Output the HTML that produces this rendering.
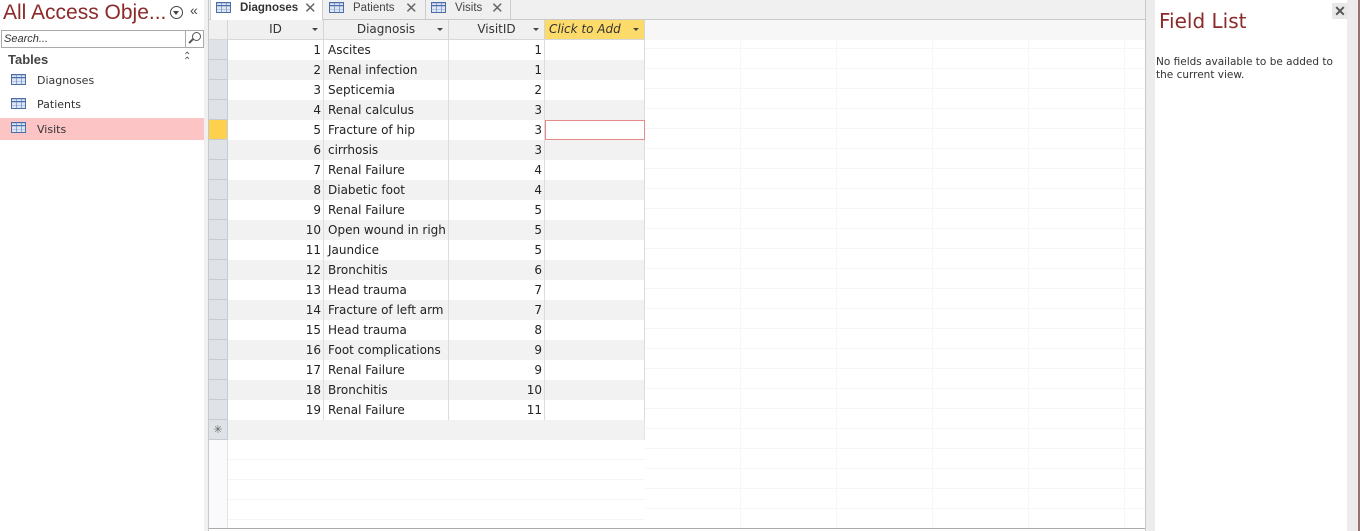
<!DOCTYPE html>
<html><head><style>
*{box-sizing:border-box;margin:0;padding:0}
body{width:1360px;height:531px;overflow:hidden;background:#fff;font-family:"Liberation Sans",sans-serif;position:relative;color:#222}
.a{position:absolute}
.tblico{position:absolute;width:15px;height:11px;border:1px solid #4a6ea8;background:
linear-gradient(#4a6ea8,#4a6ea8) 0 2px/100% 1px no-repeat,
repeating-linear-gradient(90deg,transparent 0 4px,#8aa3cc 4px 5px),
repeating-linear-gradient(0deg,#dfe7f5 0 2px,#b8c8e4 2px 3px)}
.row{position:absolute;left:209px;height:20px;width:436px;font-family:"DejaVu Sans",sans-serif;font-size:12px;line-height:20px;color:#222}
.c{position:absolute;top:0;height:20px;border-right:1px solid #dcdcdc}
.hd{position:absolute;top:20px;height:20px;font-family:"DejaVu Sans",sans-serif;font-size:12px;line-height:19px;text-align:center;background:#f0f0f0;border-right:1px solid #d4d4d4;border-bottom:1px solid #d8d8d8;color:#333}
.dd{position:absolute;right:5px;top:8px;border-left:3px solid transparent;border-right:3px solid transparent;border-top:3px solid #444}
.x{font-size:15px;color:#666}
</style></head><body>
<div class="a" style="left:3px;top:1px;font-size:21px;color:#8b2a2a;white-space:nowrap">All Access Obje...</div>
<div class="a" style="left:170px;top:6px;width:13px;height:13px;border:1px solid #444;border-radius:50%"></div>
<div class="a" style="left:173px;top:11px;border-left:3.5px solid transparent;border-right:3.5px solid transparent;border-top:4px solid #444"></div>
<div class="a" style="left:190px;top:2px;font-size:14px;color:#444">«</div>
<div class="a" style="left:1px;top:30px;width:203px;height:18px;border:1px solid #aaa;font-size:11px;font-style:italic;line-height:16px;padding-left:2px;color:#333">Search...</div>
<div class="a" style="left:185px;top:30px;width:1px;height:18px;background:#aaa"></div>
<div class="a" style="left:192px;top:32px;width:9px;height:9px;border:1.3px solid #555;border-radius:50%"></div>
<div class="a" style="left:188px;top:40px;width:6px;height:1.5px;background:#555;transform:rotate(-45deg)"></div>
<div class="a" style="left:8px;top:52px;font-size:13px;font-weight:bold;color:#444">Tables</div>
<div class="a" style="left:183px;top:54px;font-size:10px;color:#555;line-height:5px">⌃<br>⌃</div>
<div class="tblico" style="left:11px;top:74px"></div>
<div class="a" style="left:37px;top:74px;font-family:'DejaVu Sans',sans-serif;font-size:11px;color:#333">Diagnoses</div>
<div class="tblico" style="left:11px;top:98px"></div>
<div class="a" style="left:37px;top:98px;font-family:'DejaVu Sans',sans-serif;font-size:11px;color:#333">Patients</div>
<div class="a" style="left:0;top:118px;width:204px;height:22px;background:#fcc4c4"></div>
<div class="tblico" style="left:11px;top:122px"></div>
<div class="a" style="left:37px;top:123px;font-family:'DejaVu Sans',sans-serif;font-size:11px;color:#333">Visits</div>
<div class="a" style="left:204px;top:0;width:5px;height:531px;background:#f0f0f0;border-right:1px solid #c8c8c8"></div>
<div class="a" style="left:209px;top:0;width:936px;height:20px;background:#f0f0f0;border-bottom:1px solid #c8c8c8"></div>
<div class="a" style="left:210px;top:0;width:113px;height:20px;background:#fff;border-left:1px solid #ccc;border-right:1px solid #ccc"></div>
<div class="tblico" style="left:216px;top:2px"></div>
<div class="a" style="left:240px;top:2px;font-size:11.5px;font-weight:bold;color:#333">Diagnoses</div>
<div class="a x" style="left:304px;top:-1px">✕</div>
<div class="tblico" style="left:329px;top:2px"></div>
<div class="a" style="left:353px;top:2px;font-size:11.5px;color:#444">Patients</div>
<div class="a x" style="left:405px;top:-1px">✕</div>
<div class="a" style="left:425px;top:0;width:1px;height:20px;background:#ccc"></div>
<div class="tblico" style="left:431px;top:2px"></div>
<div class="a" style="left:455px;top:2px;font-size:11.5px;color:#444">Visits</div>
<div class="a x" style="left:491px;top:-1px">✕</div>
<div class="a" style="left:510px;top:0;width:1px;height:20px;background:#ccc"></div>
<!-- faint background grid -->
<div class="a" style="left:645px;top:40px;width:500px;height:488px;background:
repeating-linear-gradient(0deg,transparent 0 19px,#f6f6f6 19px 20px),
repeating-linear-gradient(90deg,transparent 0 95px,#f6f6f6 95px 96px)"></div>
<div class="a" style="left:228px;top:440px;width:417px;height:88px;background:
repeating-linear-gradient(180deg,transparent 0 19px,#f6f6f6 19px 20px)"></div>
<div class="a" style="left:209px;top:440px;width:19px;height:88px;background:#fafafc;border-right:1px solid #e4e4e4"></div>
<div class="a" style="left:209px;top:528px;width:936px;height:1px;background:#aaa"></div>
<div class="hd" style="left:209px;width:19px"></div>
<div class="hd" style="left:228px;width:96px">ID<span class="dd"></span></div>
<div class="hd" style="left:324px;width:125px">Diagnosis<span class="dd"></span></div>
<div class="hd" style="left:449px;width:96px">VisitID<span class="dd"></span></div>
<div class="hd" style="left:545px;width:100px;background:#fddb6a;font-style:italic;text-align:left;padding-left:4px;color:#333">Click to Add<span class="dd"></span></div>
<div class="hd" style="left:645px;width:500px;background:#f7f7f7;border:none"></div>
<div id="rows"></div>
<script>
var d=["Ascites","Renal infection","Septicemia","Renal calculus","Fracture of hip","cirrhosis","Renal Failure","Diabetic foot","Renal Failure","Open wound in righ","Jaundice","Bronchitis","Head trauma","Fracture of left arm","Head trauma","Foot complications","Renal Failure","Bronchitis","Renal Failure"];
var v=[1,1,2,3,3,3,4,4,5,5,5,6,7,7,8,9,9,10,11];
var h="";
for(var i=0;i<20;i++){var y=40+i*20;var bg=(i%2)?"#f2f2f2":"#fff";
var sel=i==4?"#fdd14e":"#dfe2e7";
h+='<div class="row" style="top:'+y+'px;background:'+bg+'">';
h+='<div class="c" style="left:0;width:19px;background:'+sel+';border-right:1px solid #c8ccd2;border-bottom:1px solid #c8ccd2;text-align:center;color:#666;font-size:11px">'+(i==19?'✳':'')+'</div>';
if(i<19){
h+='<div class="c" style="left:19px;width:96px;text-align:right;padding-right:2px">'+(i+1)+'</div>';
h+='<div class="c" style="left:115px;width:125px;padding-left:4px;white-space:nowrap;overflow:hidden">'+d[i]+'</div>';
h+='<div class="c" style="left:240px;width:96px;text-align:right;padding-right:2px">'+v[i]+'</div>';
h+='<div class="c" style="left:336px;width:100px'+(i==4?';border:1px solid #e88a8a;background:#fff':'')+'"></div>';
}else{h+='<div class="c" style="left:19px;width:417px;border-right:1px solid #e6e6e6"></div>';}
h+='</div>';}
document.getElementById("rows").innerHTML=h;
</script>
<div class="a" style="left:1145px;top:0;width:10px;height:531px;background:#ececec;border-left:1px solid #c8c8c8"></div>
<div class="a" style="left:1155px;top:4px;width:192px;height:527px;background:#fff"></div>
<div class="a" style="left:1347px;top:0;width:11px;height:531px;background:#ececec"></div>
<div class="a" style="left:1358px;top:0;width:2px;height:531px;background:#9a7070"></div>
<div class="a" style="left:1159px;top:9px;font-family:'DejaVu Sans',sans-serif;font-size:20px;color:#8b2a2a">Field List</div>
<div class="a" style="left:1332px;top:3px;width:16px;height:16px;background:#e8e8e8;font-size:14px;font-weight:bold;text-align:center;line-height:16px;color:#555">✕</div>
<div class="a" style="left:1156px;top:56px;font-family:'DejaVu Sans',sans-serif;font-size:10.5px;line-height:13px;color:#333;width:190px">No fields available to be added to the current view.</div>
</body></html>
